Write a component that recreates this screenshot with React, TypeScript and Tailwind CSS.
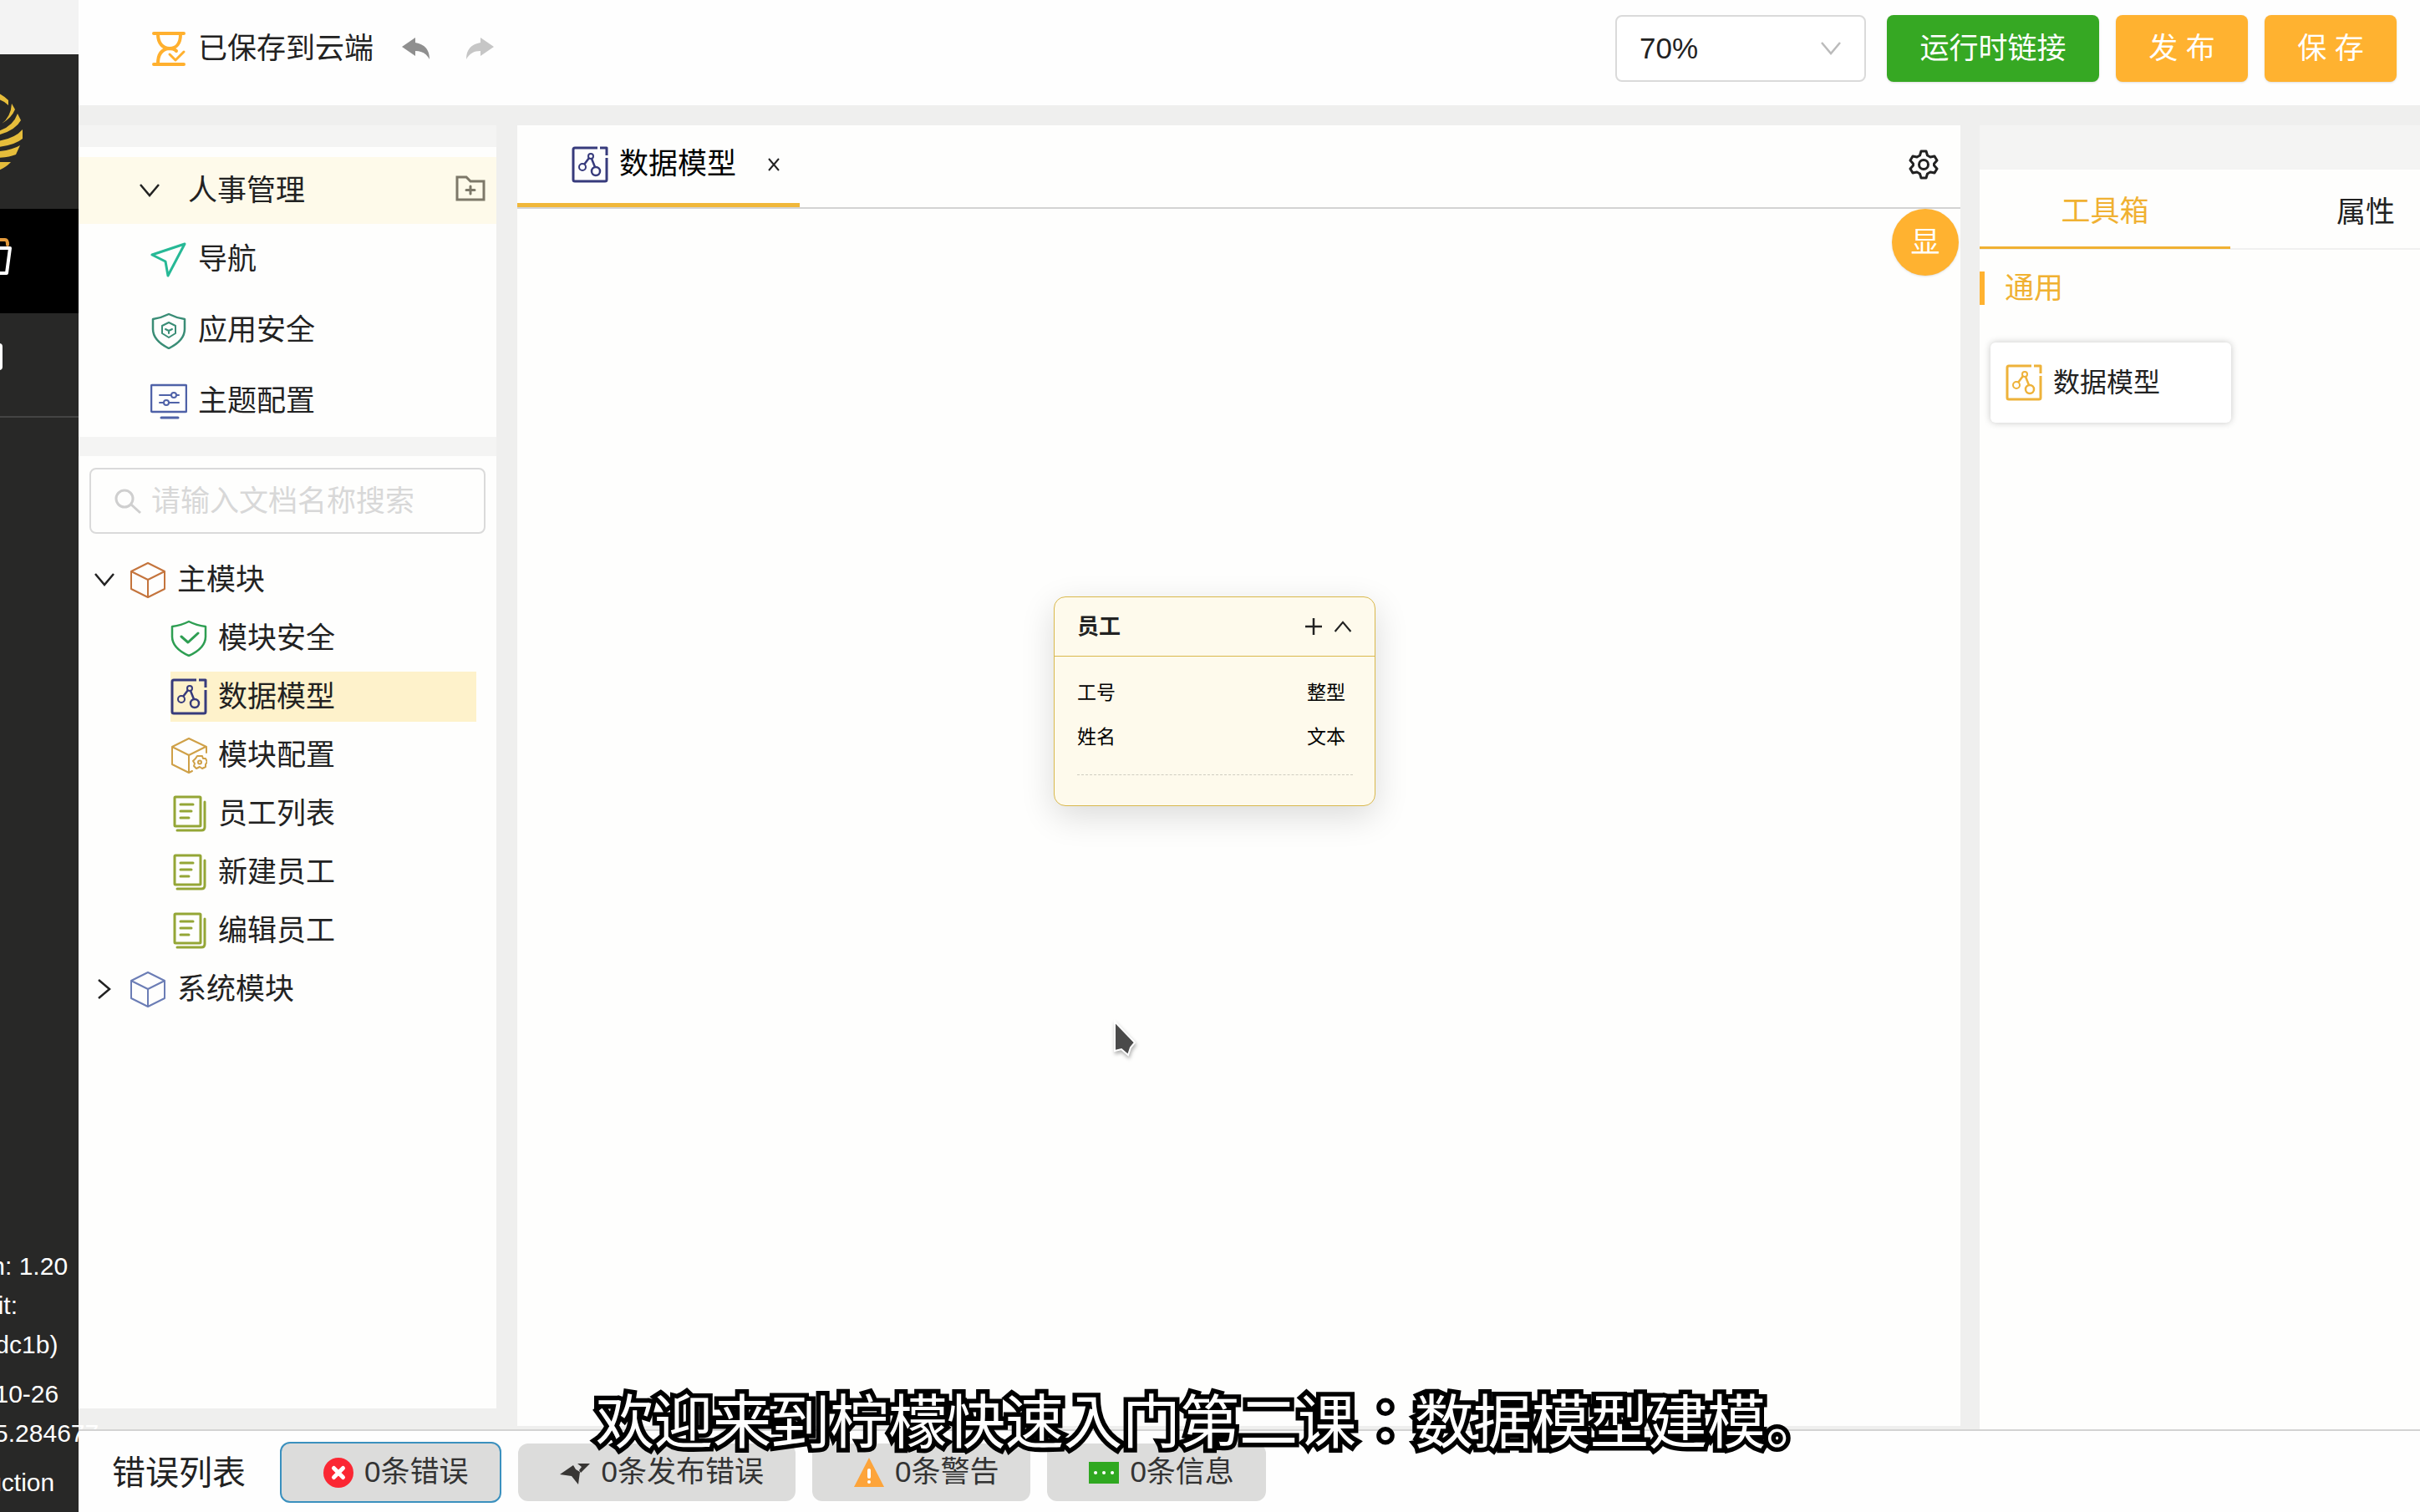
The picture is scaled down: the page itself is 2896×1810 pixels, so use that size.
import type { ReactNode } from "react";

type IconProps = { className?: string };

const svgBase = {
  fill: "none",
  stroke: "currentColor",
  strokeWidth: 2.5,
  strokeLinecap: "round",
  strokeLinejoin: "round",
} as const;

const Chevron = ({ className }: IconProps): ReactNode => (
  <svg viewBox="0 0 28 28" className={className} {...svgBase} strokeLinecap="butt" strokeLinejoin="miter">
    <path d="M3 7 14 20 25 7" />
  </svg>
);

const HourglassIcon = (): ReactNode => (
  <svg viewBox="0 0 42 44" className="h-11 w-[42px] text-[#ffb02e]" {...svgBase} strokeWidth={4}>
    <path d="M3 4H39M3 41H39M8 5C8 16 14 22 22 22S35 16 35 5" />
    <path d="M8 40C8 29 13 23 21 22C25 22 28 23 30 25" />
    <path d="M22 29 29 36 39 26" strokeWidth={3} />
  </svg>
);

const UndoIcon = ({ className }: IconProps): ReactNode => (
  <svg viewBox="0 0 34 28" className={className} fill="currentColor">
    <path d="M0 12 16 1V7C27 9 33 15 33 27C29 20 24 17 16 17V23Z" />
  </svg>
);

const FolderPlusIcon = (): ReactNode => (
  <svg viewBox="0 0 36 32" className="h-8 w-9 text-[#7d7869]" {...svgBase} strokeWidth={3} strokeLinejoin="miter">
    <path d="M2 2H13L18 7H34V29H2Z" />
    <path d="M18 13V22M13 17.5H23" />
  </svg>
);

const PlaneIcon = (): ReactNode => (
  <svg viewBox="0 0 44 44" className="size-11 text-[#27b996]" {...svgBase} strokeWidth={3}>
    <path d="M2 16 41 3 21 41 18 24Z" />
  </svg>
);

const AppShieldIcon = (): ReactNode => (
  <svg viewBox="0 0 44 44" className="size-11 text-[#3a8d76]" {...svgBase}>
    <path d="M22 2C28 5 34 7 41 8V20C41 31 32 38 22 43C12 38 3 31 3 20V8C10 7 16 5 22 2Z" />
    <path d="M22 12 30 16V25L22 30 14 25V16ZM18 20 22 22 26 20M22 22V25" strokeWidth={2} />
  </svg>
);

const ThemeIcon = (): ReactNode => (
  <svg viewBox="0 0 44 44" className="size-11 text-[#4f62a8]" {...svgBase}>
    <rect x="1" y="2" width="42" height="32" rx="1" />
    <path d="M11 14H25M31 14H34M11 23H16M22 23H34" strokeWidth={2} />
    <circle cx="28" cy="14" r="3" strokeWidth={2} />
    <circle cx="19" cy="23" r="3" strokeWidth={2} />
    <path d="M13 41H33" strokeWidth={3} />
  </svg>
);

const CubeIcon = ({ className }: IconProps): ReactNode => (
  <svg viewBox="0 0 44 44" className={className} {...svgBase} strokeWidth={2}>
    <path d="M22 2 42 12V33L22 43 2 33V12ZM2 12 22 22 42 12M22 22V43" />
  </svg>
);

const ShieldCheckIcon = (): ReactNode => (
  <svg viewBox="0 0 44 44" className="size-11 text-[#2e9e52]" {...svgBase}>
    <path d="M22 2C28 5 34 7 42 8V20C42 31 33 38 22 43C11 38 2 31 2 20V8C10 7 16 5 22 2Z" />
    <path d="M13 20 21 27 33 16" strokeWidth={3} />
  </svg>
);

const ModelIcon = ({ className }: IconProps): ReactNode => (
  <svg viewBox="0 0 44 44" className={className} {...svgBase} strokeLinecap="butt">
    <path d="M31 2H4Q2 2 2 4V40Q2 42 4 42H40Q42 42 42 40V14M34 2H42V11" strokeWidth={3} />
    <circle cx="23" cy="12" r="3" strokeWidth={2} />
    <circle cx="13" cy="25" r="4" strokeWidth={2} />
    <circle cx="29" cy="30" r="5" />
    <path d="M21 14 15 22M24 15 28 25" />
  </svg>
);

const CubeGearIcon = (): ReactNode => (
  <svg viewBox="0 0 44 44" className="size-11 text-[#cfa047]" {...svgBase} strokeWidth={2}>
    <path d="M43 19V12L22 2 2 12V33L22 43 26 41M2 12 22 22 42 12M22 22V43" />
    <path d="M32 23H38L39 26 42 26 44 30 42 33 42 36 38 38 35 36 31 38 28 35 29 32 27 29 30 26Z" />
    <circle cx="35" cy="30.5" r="2" />
  </svg>
);

const PageIcon = (): ReactNode => (
  <svg viewBox="0 0 44 44" className="size-11 text-[#94a636]" {...svgBase} strokeWidth={3}>
    <rect x="5" y="2" width="31" height="35" rx="1" />
    <path d="M12 11H27M12 19H25M12 27H22M41 8V38Q41 42 37 42H8" />
  </svg>
);

const SearchIcon = (): ReactNode => (
  <svg viewBox="0 0 32 32" className="absolute left-[30px] size-8 text-[#cfcfcf]" {...svgBase} strokeWidth={3}>
    <circle cx="12" cy="13" r="10" />
    <path d="M20 20 31 30" strokeLinecap="butt" />
  </svg>
);

const GearIcon = (): ReactNode => (
  <svg viewBox="0 0 36 36" className="size-9 text-[#222]" {...svgBase} strokeWidth={3}>
    <path d="M15 2H21L22.5 7 26 9 31 8 34 13 30.5 17V19L34 23 31 28 26 27 22.5 29 21 34H15L13.5 29 10 27 5 28 2 23 5.5 19V17L2 13 5 8 10 9 13.5 7Z" />
    <circle cx="18" cy="18" r="5.5" />
  </svg>
);

const ErrorIcon = (): ReactNode => (
  <svg viewBox="0 0 36 36" className="size-9" fill="none">
    <circle cx="18" cy="18" r="18" fill="#fb2733" />
    <path d="M12.5 12.5 23.5 23.5M23.5 12.5 12.5 23.5" stroke="#fff" strokeWidth="5" strokeLinecap="round" />
  </svg>
);

const PublishErrorIcon = (): ReactNode => (
  <svg viewBox="0 0 36 36" className="size-9" fill="#383634">
    <path d="M0 20 16 9 19 14 24 17 22 32 14 22ZM21 7H36L25 18 23 15 26 11Z" />
  </svg>
);

const WarningIcon = (): ReactNode => (
  <svg viewBox="0 0 36 36" className="size-9">
    <path d="M18 0 36 35H0Z" fill="#fda43a" />
    <path d="M18 15V23M18 29V29.1" stroke="#fff" strokeWidth="4" strokeLinecap="round" />
  </svg>
);

const InfoIcon = (): ReactNode => (
  <svg viewBox="0 0 36 36" className="size-9">
    <rect y="5" width="36" height="26" fill="#2fa820" />
    <path d="M8 18h.1M18 18h.1M28 18h.1" stroke="#fff" strokeWidth="4" strokeLinecap="round" />
  </svg>
);

const LogoIcon = (): ReactNode => (
  <svg viewBox="-40 106 66 102" className="h-[102px] w-[66px]" fill="#e6bd3b">
    <path d="M-14 108Q-2 108 9 119V125Q0 116-14 117Z" />
    <path d="M13 123 17 130Q13 140 1 147Q12 139 13 123Z" />
    <path d="M20 135 24 143Q16 158-14 163V158Q13 155 20 135Z" />
    <path d="M26 154V165Q14 175-16 176V169Q14 168 26 154Z" />
    <path d="M23 173 18 184Q6 189-20 188V181Q10 181 23 173Z" />
    <path d="M12 193Q3 203-14 206V193Z" />
  </svg>
);

const FolderIcon = (): ReactNode => (
  <svg viewBox="0 0 42 50" className="h-[50px] w-[42px]" {...svgBase} strokeWidth={4}>
    <path d="M4 12V3H33Q36 3 36 9" stroke="#e39a3c" />
    <path d="M2 13H39L35 43H5Z" stroke="#fff" />
  </svg>
);

const appEntries: ReadonlyArray<{ label: string; icon: ReactNode }> = [
  { label: "导航", icon: <PlaneIcon /> },
  { label: "应用安全", icon: <AppShieldIcon /> },
  { label: "主题配置", icon: <ThemeIcon /> },
];

const documents: ReadonlyArray<{ label: string; icon: ReactNode; active?: boolean }> = [
  { label: "模块安全", icon: <ShieldCheckIcon /> },
  { label: "数据模型", icon: <ModelIcon className="size-11 text-[#373b7c]" />, active: true },
  { label: "模块配置", icon: <CubeGearIcon /> },
  { label: "员工列表", icon: <PageIcon /> },
  { label: "新建员工", icon: <PageIcon /> },
  { label: "编辑员工", icon: <PageIcon /> },
];

const fields: ReadonlyArray<{ name: string; type: string }> = [
  { name: "工号", type: "整型" },
  { name: "姓名", type: "文本" },
];

const reports: ReadonlyArray<{ label: string; icon: ReactNode; active?: boolean }> = [
  { label: "0条错误", icon: <ErrorIcon />, active: true },
  { label: "0条发布错误", icon: <PublishErrorIcon /> },
  { label: "0条警告", icon: <WarningIcon /> },
  { label: "0条信息", icon: <InfoIcon /> },
];

const Rail = (): ReactNode => (
  <aside className="relative z-10 -ml-[107px] flex w-[201px] shrink-0 flex-col bg-[#f3f3f3] pt-[65px] text-white">
    <div className="flex flex-1 flex-col bg-[#282827]">
      <div className="flex h-[185px] items-center justify-center">
        <LogoIcon />
      </div>
      <button aria-label="应用" className="flex h-[125px] items-center justify-center bg-black pb-2">
        <FolderIcon />
      </button>
      <button aria-label="模块" className="flex h-[125px] items-center justify-center border-b-2 border-[#444] pb-5">
        <span className="h-8 w-[18px] rounded-sm border-4 border-white" />
      </button>
      <div className="mt-auto flex flex-col gap-3 pb-3 text-center text-[30px] leading-[47px] whitespace-nowrap">
        <div>
          <p>Version: 1.20</p>
          <p>&nbsp;Git:</p>
          <p>(6e0adc1b)</p>
        </div>
        <div>
          <p>2021-10-26</p>
          <p className="text-left">17:40:55.284677</p>
        </div>
        <p>Production</p>
      </div>
    </div>
  </aside>
);

const Header = (): ReactNode => (
  <header className="flex h-[126px] shrink-0 items-start bg-[#fefefe] pt-[18px] pr-7 pl-[87px]">
    <div className="flex h-20 items-center">
      <HourglassIcon />
      <span className="ml-[14px]">已保存到云端</span>
      <button aria-label="撤销" className="ml-[34px]">
        <UndoIcon className="h-7 w-[34px] text-[#8f8f8f]" />
      </button>
      <button aria-label="重做" className="ml-[42px]">
        <UndoIcon className="h-7 w-[34px] -scale-x-100 text-[#c6c6c6]" />
      </button>
    </div>
    <div className="ml-auto flex h-20 items-center">
      <div className="relative flex h-full w-[300px] items-center">
        <select
          aria-label="缩放"
          defaultValue="70%"
          className="size-full appearance-none rounded-lg border-2 border-[#dadada] bg-white pl-[27px]"
        >
          <option>70%</option>
          <option>100%</option>
        </select>
        <Chevron className="pointer-events-none absolute right-7 size-7 text-[#bbb]" />
      </div>
      <button className="ml-[25px] h-full w-[254px] rounded-lg bg-[#36a823] text-white shadow-sm">运行时链接</button>
      <button className="ml-5 h-full w-[158px] rounded-lg bg-[#ffb230] text-white shadow-sm">发 布</button>
      <button className="ml-5 h-full w-[158px] rounded-lg bg-[#ffb230] text-white shadow-sm">保 存</button>
    </div>
  </header>
);

const Explorer = (): ReactNode => (
  <div className="mb-[25px] flex w-[500px] shrink-0 flex-col gap-[23px] bg-[#f4f4f3] pt-[26px]">
    <nav className="bg-[#fefefd] pt-3">
      <div className="flex h-20 items-center bg-[#fefaea] pr-[13px] pl-[71px]">
        <Chevron className="size-7" />
        <span className="ml-8">人事管理</span>
        <button aria-label="新建文件夹" className="ml-auto pb-1">
          <FolderPlusIcon />
        </button>
      </div>
      {appEntries.map((entry) => (
        <a key={entry.label} href="#" className="flex h-[85px] items-center gap-[13px] pl-[86px]">
          {entry.icon}
          {entry.label}
        </a>
      ))}
    </nav>

    <div className="flex-1 bg-[#fefefd] px-[13px] pt-[14px]">
      <label className="relative flex h-[79px] items-center">
        <SearchIcon />
        <input
          aria-label="搜索文档"
          placeholder="请输入文档名称搜索"
          className="size-full rounded-lg border-2 border-[#dadada] pl-[72px] placeholder:text-[#d8d8d8]"
        />
      </label>
      <ul className="mt-5">
        <li>
          <div className="flex h-[70px] items-center pl-1">
            <Chevron className="size-7" />
            <CubeIcon className="ml-4 size-11 text-[#c4743c]" />
            <span className="ml-[13px]">主模块</span>
          </div>
          <ul>
            {documents.map((doc) => (
              <li key={doc.label} className="py-[5px] pr-[11px] pl-[97px]">
                <a
                  href="#"
                  className={`flex h-[60px] items-center gap-[13px] ${doc.active ? "bg-[#fef2cb]" : ""}`}
                >
                  {doc.icon}
                  {doc.label}
                </a>
              </li>
            ))}
          </ul>
        </li>
        <li className="flex h-[70px] items-center pl-1">
          <Chevron className="size-7 -rotate-90" />
          <CubeIcon className="ml-4 size-11 text-[#6b7db5]" />
          <span className="ml-[13px]">系统模块</span>
        </li>
      </ul>
    </div>
  </div>
);

const EntityCard = (): ReactNode => (
  <div className="absolute top-[464px] left-[642px] h-[251px] w-[385px] rounded-[14px] border border-[#d9b84c] bg-[#fefaec] shadow-[0_12px_40px_rgba(0,0,0,0.14)]">
    <div className="flex h-[71px] items-center border-b border-[#d9b84c] pr-[26px] pl-[27px]">
      <span className="text-[26px] font-bold">员工</span>
      <button aria-label="添加" className="ml-auto">
        <svg viewBox="0 0 24 24" className="size-6" {...svgBase} strokeLinecap="butt">
          <path d="M2 12H22M12 2V22" />
        </svg>
      </button>
      <button aria-label="收起" className="ml-[11px]">
        <Chevron className="size-6 rotate-180" />
      </button>
    </div>
    <div className="pt-[17px] pr-[26px] pl-[27px] text-[23px] text-black">
      {fields.map((field) => (
        <div key={field.name} className="flex h-[53px] items-center justify-between pr-[9px]">
          <span>{field.name}</span>
          <span>{field.type}</span>
        </div>
      ))}
      <hr className="mt-[18px] border-dashed border-[#cfcdc0]" />
    </div>
  </div>
);

const Canvas = (): ReactNode => (
  <main className="mb-1 flex min-w-0 flex-1 flex-col bg-[#fefefd]">
    <div className="flex h-[100px] items-stretch border-b-2 border-[#d3d3d3] pr-[26px]">
      <div className="flex w-[338px] items-center border-b-[5px] border-[#f0b73a] pl-[65px]">
        <ModelIcon className="size-11 text-[#373b7c]" />
        <span className="ml-[13px] text-black">数据模型</span>
        <button aria-label="关闭" className="ml-9">
          <svg viewBox="0 0 18 18" className="size-[18px]" {...svgBase} strokeWidth={2} strokeLinecap="butt">
            <path d="M3 2 15 16M15 2 3 16" />
          </svg>
        </button>
      </div>
      <button aria-label="设置" className="mb-[5px] ml-auto">
        <GearIcon />
      </button>
    </div>
    <div className="relative flex-1">
      <button className="absolute top-0 right-0.5 size-20 rounded-full bg-[#ffb230] text-white shadow-sm">显</button>
      <EntityCard />
      <svg
        viewBox="0 0 32 48"
        className="absolute top-[970px] left-[711px] h-12 w-8 drop-shadow-[1px_3px_2px_rgba(0,0,0,0.3)]"
      >
        <path d="M4 3V38L12 36 20 43 23 34 28 28Z" fill="#4a4a4a" stroke="#fff" strokeWidth="2" />
      </svg>
    </div>
  </main>
);

const Inspector = (): ReactNode => (
  <section className="flex w-[527px] shrink-0 flex-col bg-[#f4f4f3] pt-[53px]">
    <div className="flex-1 overflow-hidden bg-[#fefefd]">
      <div className="flex h-[96px] gap-3 border-b-2 border-[#f0f0f0]">
        <button className="-mb-px w-[300px] shrink-0 border-b-[3px] border-[#f0b132] pt-2 text-[#f0b132]">
          工具箱
        </button>
        <button className="w-[300px] shrink-0 pt-2">属性</button>
      </div>
      <h2 className="mt-[26px] border-l-[6px] border-[#ffb230] pl-6 leading-10 text-[#f0b132]">通用</h2>
      <div className="mt-[45px] ml-[13px] flex h-24 w-[288px] items-center gap-[13px] rounded-md bg-white pl-[18px] text-[32px] shadow-[0_0_8px_rgba(0,0,0,0.22)]">
        <ModelIcon className="size-11 text-[#eeb23a]" />
        数据模型
      </div>
    </div>
  </section>
);

const StatusBar = (): ReactNode => (
  <footer className="relative z-20 flex h-[99px] shrink-0 items-center gap-5 border-t-2 border-[#d3d3d3] bg-[#fefefe] pt-0.5 pl-10">
    <h2 className="mr-[21px] text-[40px]">错误列表</h2>
    {reports.map((report) => (
      <button
        key={report.label}
        className={`flex items-center gap-[13px] rounded-xl bg-[#dcdcdb] pr-[38px] pl-[50px] text-[#333] ${
          report.active ? "h-[73px] border-2 border-[#3a90be]" : "h-[69px]"
        }`}
      >
        {report.icon}
        {report.label}
      </button>
    ))}
  </footer>
);

const App = (): ReactNode => {
  return (
    <div className="relative flex h-screen overflow-hidden bg-[#efefee] font-['Liberation_Sans','Noto_Sans_CJK_SC',sans-serif] text-[35px] text-[#222]">
      <Rail />
      <div className="flex min-w-0 flex-1 flex-col">
        <Header />
        <div className="flex min-h-0 flex-1 pt-6">
          <Explorer />
          <div className="w-[25px] shrink-0" />
          <Canvas />
          <div className="w-[23px] shrink-0" />
          <Inspector />
        </div>
        <StatusBar />
      </div>
      <p className="pointer-events-none absolute inset-x-0 bottom-[77px] z-30 text-center font-['Noto_Sans_CJK_JP',sans-serif] text-[70px] leading-[70px] text-white [-webkit-text-stroke:11px_#000] [paint-order:stroke_fill]">
        欢迎来到柠檬快速入门第二课：数据模型建模。
      </p>
    </div>
  );
};

export default App;
